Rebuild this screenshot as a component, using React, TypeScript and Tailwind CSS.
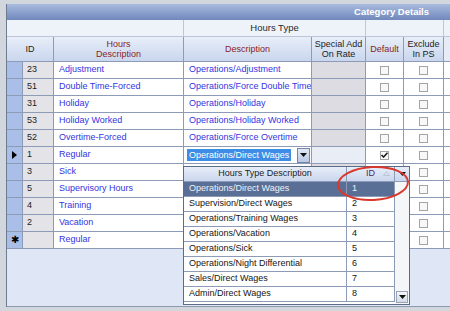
import React from "react";

type Row = {
  id: string;
  hours: string;
  desc: string;
  current?: boolean;
  isNew?: boolean;
  def?: boolean;
};

// rows under the open lookup list keep an empty description (hidden by the popup)
const rows: Row[] = [
  { id: "23", hours: "Adjustment", desc: "Operations/Adjustment" },
  { id: "51", hours: "Double Time-Forced", desc: "Operations/Force Double Time" },
  { id: "31", hours: "Holiday", desc: "Operations/Holiday" },
  { id: "53", hours: "Holiday Worked", desc: "Operations/Holiday Worked" },
  { id: "52", hours: "Overtime-Forced", desc: "Operations/Force Overtime" },
  { id: "1", hours: "Regular", desc: "Operations/Direct Wages", current: true, def: true },
  { id: "3", hours: "Sick", desc: "" },
  { id: "5", hours: "Supervisory Hours", desc: "" },
  { id: "4", hours: "Training", desc: "" },
  { id: "2", hours: "Vacation", desc: "" },
  { id: "", hours: "Regular", desc: "", isNew: true },
];

const lookup = [
  ["Operations/Direct Wages", "1"],
  ["Supervision/Direct Wages", "2"],
  ["Operations/Training Wages", "3"],
  ["Operations/Vacation", "4"],
  ["Operations/Sick", "5"],
  ["Operations/Night Differential", "6"],
  ["Sales/Direct Wages", "7"],
  ["Admin/Direct Wages", "8"],
];

function Check({ checked }: { checked?: boolean }) {
  return (
    <span className="flex h-[9px] w-[9px] items-center justify-center border border-[#a4a4a8] bg-[#f8f8f8]">
      {checked ? (
        <svg width="7" height="6" viewBox="0 0 7 6" aria-hidden>
          <path d="M0.5 3 L2.6 5 L6.5 0.8" stroke="#111" strokeWidth="1.5" fill="none" />
        </svg>
      ) : null}
    </span>
  );
}

function DownArrow() {
  return (
    <svg width="7" height="4" viewBox="0 0 7 4" aria-hidden>
      <path d="M0 0 H7 L3.5 4 Z" fill="#111" />
    </svg>
  );
}

const cell = "h-full shrink-0 border-r border-b border-[#8d9bb6] flex items-center overflow-hidden whitespace-nowrap";

export default function App() {
  return (
    <div className="relative h-[311px] w-[450px] overflow-hidden bg-[#d2d6dd] pl-[6px] pt-[4px] font-['Liberation_Sans',Arial,sans-serif] text-[9px] text-[#1c1c1c]">
      <div className="flex h-[303px] w-[444px] flex-col border-l border-[#6f7b90] bg-[#dfe6f5]">
        {/* title band */}
        <div className="flex h-[16px] shrink-0 items-center justify-end bg-gradient-to-b from-[#a9bbdf] to-[#7088bb] pr-[21px] text-[9.5px] font-bold text-white">
          Category Details
        </div>

        {/* group header */}
        <div className="flex h-[17px] shrink-0 bg-[#eef2f9]">
          <div className="h-full w-[177px] shrink-0 border-r border-b border-[#bcc6d8]" />
          <div className="flex h-full w-[182px] shrink-0 items-center justify-center border-r border-b border-[#bcc6d8] text-[9.5px] text-[#2a2a2a]">
            Hours Type
          </div>
          <div className="h-full w-[78px] shrink-0 border-r border-b border-[#bcc6d8]" />
          <div className="h-full flex-1 border-b border-[#bcc6d8]" />
        </div>

        {/* column headers */}
        <div className="flex h-[25px] shrink-0 bg-gradient-to-b from-[#e8eef9] to-[#c8d5ed] text-center leading-[10px]">
          <div className={`${cell} w-[47px] justify-center`}>ID</div>
          <div className={`${cell} w-[130px] justify-center text-[#8a1c26]`}>
            Hours
            <br />
            Description
          </div>
          <div className={`${cell} w-[128px] justify-center text-[#8a1c26]`}>Description</div>
          <div className={`${cell} w-[54px] justify-center`}>
            Special Add
            <br />
            On Rate
          </div>
          <div className={`${cell} w-[38px] justify-center text-[#8a1c26]`}>Default</div>
          <div className={`${cell} w-[40px] justify-center`}>
            Exclude
            <br />
            In PS
          </div>
          <div className="h-full flex-1 border-b border-[#8d9bb6] bg-[#e6ebf5]" />
        </div>

        {/* data rows */}
        {rows.map((r, i) => (
          <div key={i} className="flex h-[17px] shrink-0">
            <div className={`${cell} w-[16px] justify-center bg-[#a9bfe7]`}>
              {r.current ? (
                <svg width="5" height="8" viewBox="0 0 5 8" aria-hidden>
                  <path d="M0 0 L5 4 L0 8 Z" fill="#000" />
                </svg>
              ) : null}
              {r.isNew ? <span className="text-[10px] leading-none text-black">✱</span> : null}
            </div>
            <div className={`${cell} w-[31px] bg-[#e3e3e8] pl-[4px]`}>{r.id}</div>
            <div className={`${cell} w-[130px] bg-white pl-[5px] text-[#3434df]`}>{r.hours}</div>
            <div className={`${cell} w-[128px] bg-white pl-[3px] text-[#3434df]`}>
              {r.current ? (
                <div className="flex w-full items-center">
                  <span className="bg-[#3d8de6] px-[2px] leading-[12px] text-white">{r.desc}</span>
                  <span className="ml-auto mr-[1px] flex h-[15px] w-[13px] items-center justify-center border border-[#7585a8] bg-gradient-to-b from-[#e2e9f5] to-[#b9c8e4]">
                    <DownArrow />
                  </span>
                </div>
              ) : (
                <span className="pl-[2px]">{r.desc}</span>
              )}
            </div>
            <div className={`${cell} w-[54px] ${r.current ? "bg-[#e9edf6]" : "bg-[#dcdce2]"}`} />
            <div className={`${cell} w-[38px] justify-center bg-white`}>
              {r.isNew ? null : <Check checked={r.def} />}
            </div>
            <div className={`${cell} w-[40px] justify-center bg-white`}>
              <Check />
            </div>
            <div className="h-full flex-1 border-b border-[#8d9bb6] bg-white" />
          </div>
        ))}

        <div className="flex-1 border-b border-[#8d98ac]" />
      </div>

      {/* lookup dropdown */}
      <div className="absolute left-[183px] top-[166px] flex h-[139px] w-[227px] border border-[#5d6c85] bg-white">
        <div className="flex w-[211px] flex-col">
          <div className="flex h-[15px] shrink-0 bg-gradient-to-b from-[#e8eef9] to-[#c8d5ed]">
            <div className={`${cell} w-[163px] justify-center`}>Hours Type Description</div>
            <div className={`${cell} relative w-[48px] justify-center text-[#5a1f5e]`}>
              ID
              <svg className="absolute right-[4px] top-[4px]" width="7" height="5" viewBox="0 0 7 5" aria-hidden>
                <path d="M0.5 4.5 L3.5 0.5 L6.5 4.5 Z" fill="none" stroke="#b5bccb" strokeWidth="0.8" />
              </svg>
            </div>
          </div>
          {lookup.map(([name, id], i) => (
            <div
              key={id}
              className={`flex h-[15px] shrink-0 ${i === 0 ? "bg-[#5a6f95] text-[#eef2f9]" : "bg-white text-[#151515]"}`}
            >
              <div className={`${cell} w-[163px] pl-[5px]`}>{name}</div>
              <div className={`${cell} w-[48px] pl-[5px]`}>{id}</div>
            </div>
          ))}
        </div>
        <div className="flex flex-1 flex-col bg-[#f5f6f8]">
          <div className="flex h-[15px] items-center justify-center border-b border-[#8d9bb6] bg-gradient-to-b from-[#e8eef9] to-[#c8d5ed]">
            <DownArrow />
          </div>
          <div className="flex-1" />
          <div className="mx-[1px] mb-[1px] flex h-[12px] items-center justify-center border border-[#9aa3b3] bg-gradient-to-b from-[#f3f5f9] to-[#d5dbe6]">
            <DownArrow />
          </div>
        </div>
      </div>

      {/* annotation ellipse */}
      <svg className="absolute left-[334px] top-[164px]" width="78" height="40" viewBox="0 0 78 40" aria-hidden>
        <ellipse cx="39" cy="19.5" rx="35" ry="16.5" fill="none" stroke="#d9392c" strokeWidth="2" transform="rotate(-3 39 19.5)" />
      </svg>
    </div>
  );
}
